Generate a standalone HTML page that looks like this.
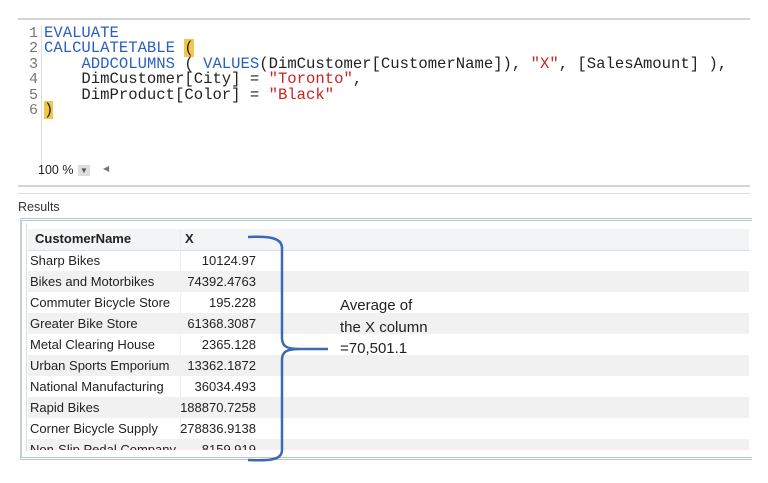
<!DOCTYPE html>
<html><head><meta charset="utf-8"><style>
body{margin:0;width:768px;height:483px;background:#fff;position:relative;overflow:hidden;font-family:"Liberation Sans",sans-serif}
.a{position:absolute}
.code{font-family:"Liberation Mono",monospace;font-size:15.6px;line-height:15.4px;white-space:pre;color:#222}
.ln{color:#777;text-align:right;width:10px;font-size:15px}
.kw{color:#2a5fbf}.st{color:#d02020}
.hl{background:#f3c84a}
.row{position:absolute;left:28px;width:721px;height:21px;font-size:13px;color:#222}
.row .n{position:absolute;left:2px;top:3px}
.row .v{position:absolute;right:493px;top:3px}
.g{background:#f1f1f1}
</style></head><body>
<div class="a" style="left:18px;top:18px;width:732px;height:2px;background:#d4d4d4"></div>
<div class="a" style="left:41px;top:26px;width:1px;height:150px;background:#ddd"></div>
<div class="a code ln" style="left:28px;top:26px">1
2
3
4
5
6</div>
<div class="a code" style="left:44px;top:26px"><span class="kw">EVALUATE</span>
<span class="kw">CALCULATETABLE</span> <span class="hl">(</span>
    <span class="kw">ADDCOLUMNS</span> ( <span class="kw">VALUES</span>(DimCustomer[CustomerName]), <span class="st">"X"</span>, [SalesAmount] ),
    DimCustomer[City] = <span class="st">"Toronto"</span>,
    DimProduct[Color] = <span class="st">"Black"</span>
<span class="hl">)</span></div>
<div class="a" style="left:38px;top:163px;font-size:12.5px;color:#222">100 %</div>
<div class="a" style="left:78px;top:165px;width:12px;height:11px;background:#ddd;font-size:8px;text-align:center;line-height:11px;color:#555">▼</div>
<div class="a" style="left:103px;top:164px;font-size:8px;color:#777">◀</div>
<div class="a" style="left:18px;top:185px;width:732px;height:2px;background:#d4d4d4"></div>
<div class="a" style="left:18px;top:193px;width:732px;height:1px;background:#ddd"></div>
<div class="a" style="left:18px;top:200px;font-size:12.5px;color:#333">Results</div>
<div class="a" style="left:20px;top:218px;width:730px;height:236px;border-top:3px double #b6c6cc;border-bottom:3px double #b6c6cc;border-left:2px solid #c8d0d4"></div>
<div class="a" style="left:26px;top:223px;width:1px;height:228px;background:#ddd"></div>
<div class="a" style="left:28px;top:229px;width:721px;height:21px;background:#f3f4f5;border-bottom:1px solid #dde"></div>
<div class="a" style="left:35px;top:231px;font-size:13px;font-weight:bold;color:#222">CustomerName</div>
<div class="a" style="left:185px;top:231px;font-size:13px;font-weight:bold;color:#222">X</div>
<div class="a" style="left:180px;top:229px;width:1px;height:222px;background:#eee"></div>
<div class="row" style="top:250px"><span class="n">Sharp Bikes</span><span class="v">10124.97</span></div>
<div class="row g" style="top:271px"><span class="n">Bikes and Motorbikes</span><span class="v">74392.4763</span></div>
<div class="row" style="top:292px"><span class="n">Commuter Bicycle Store</span><span class="v">195.228</span></div>
<div class="row g" style="top:313px"><span class="n">Greater Bike Store</span><span class="v">61368.3087</span></div>
<div class="row" style="top:334px"><span class="n">Metal Clearing House</span><span class="v">2365.128</span></div>
<div class="row g" style="top:355px"><span class="n">Urban Sports Emporium</span><span class="v">13362.1872</span></div>
<div class="row" style="top:376px"><span class="n">National Manufacturing</span><span class="v">36034.493</span></div>
<div class="row g" style="top:397px"><span class="n">Rapid Bikes</span><span class="v">188870.7258</span></div>
<div class="row" style="top:418px"><span class="n">Corner Bicycle Supply</span><span class="v">278836.9138</span></div>
<div class="row g" style="top:439px;height:11px;overflow:hidden"><span class="n">Non-Slip Pedal Company</span><span class="v">8159.919</span></div>
<svg class="a" style="left:0;top:0" width="768" height="483"><path d="M248 237 C270 236,282 238,282 248 L282 338 C282 346,286 349,300 349 L328 349 M300 349 C286 349,282 352,282 360 L282 450 C282 460,270 461,248 460" fill="none" stroke="#3d68b4" stroke-width="2.5"/></svg>
<div class="a" style="left:340px;top:295px;font-size:15px;line-height:21.5px;color:#222">Average of<br>the X column<br>=70,501.1</div>
</body></html>
